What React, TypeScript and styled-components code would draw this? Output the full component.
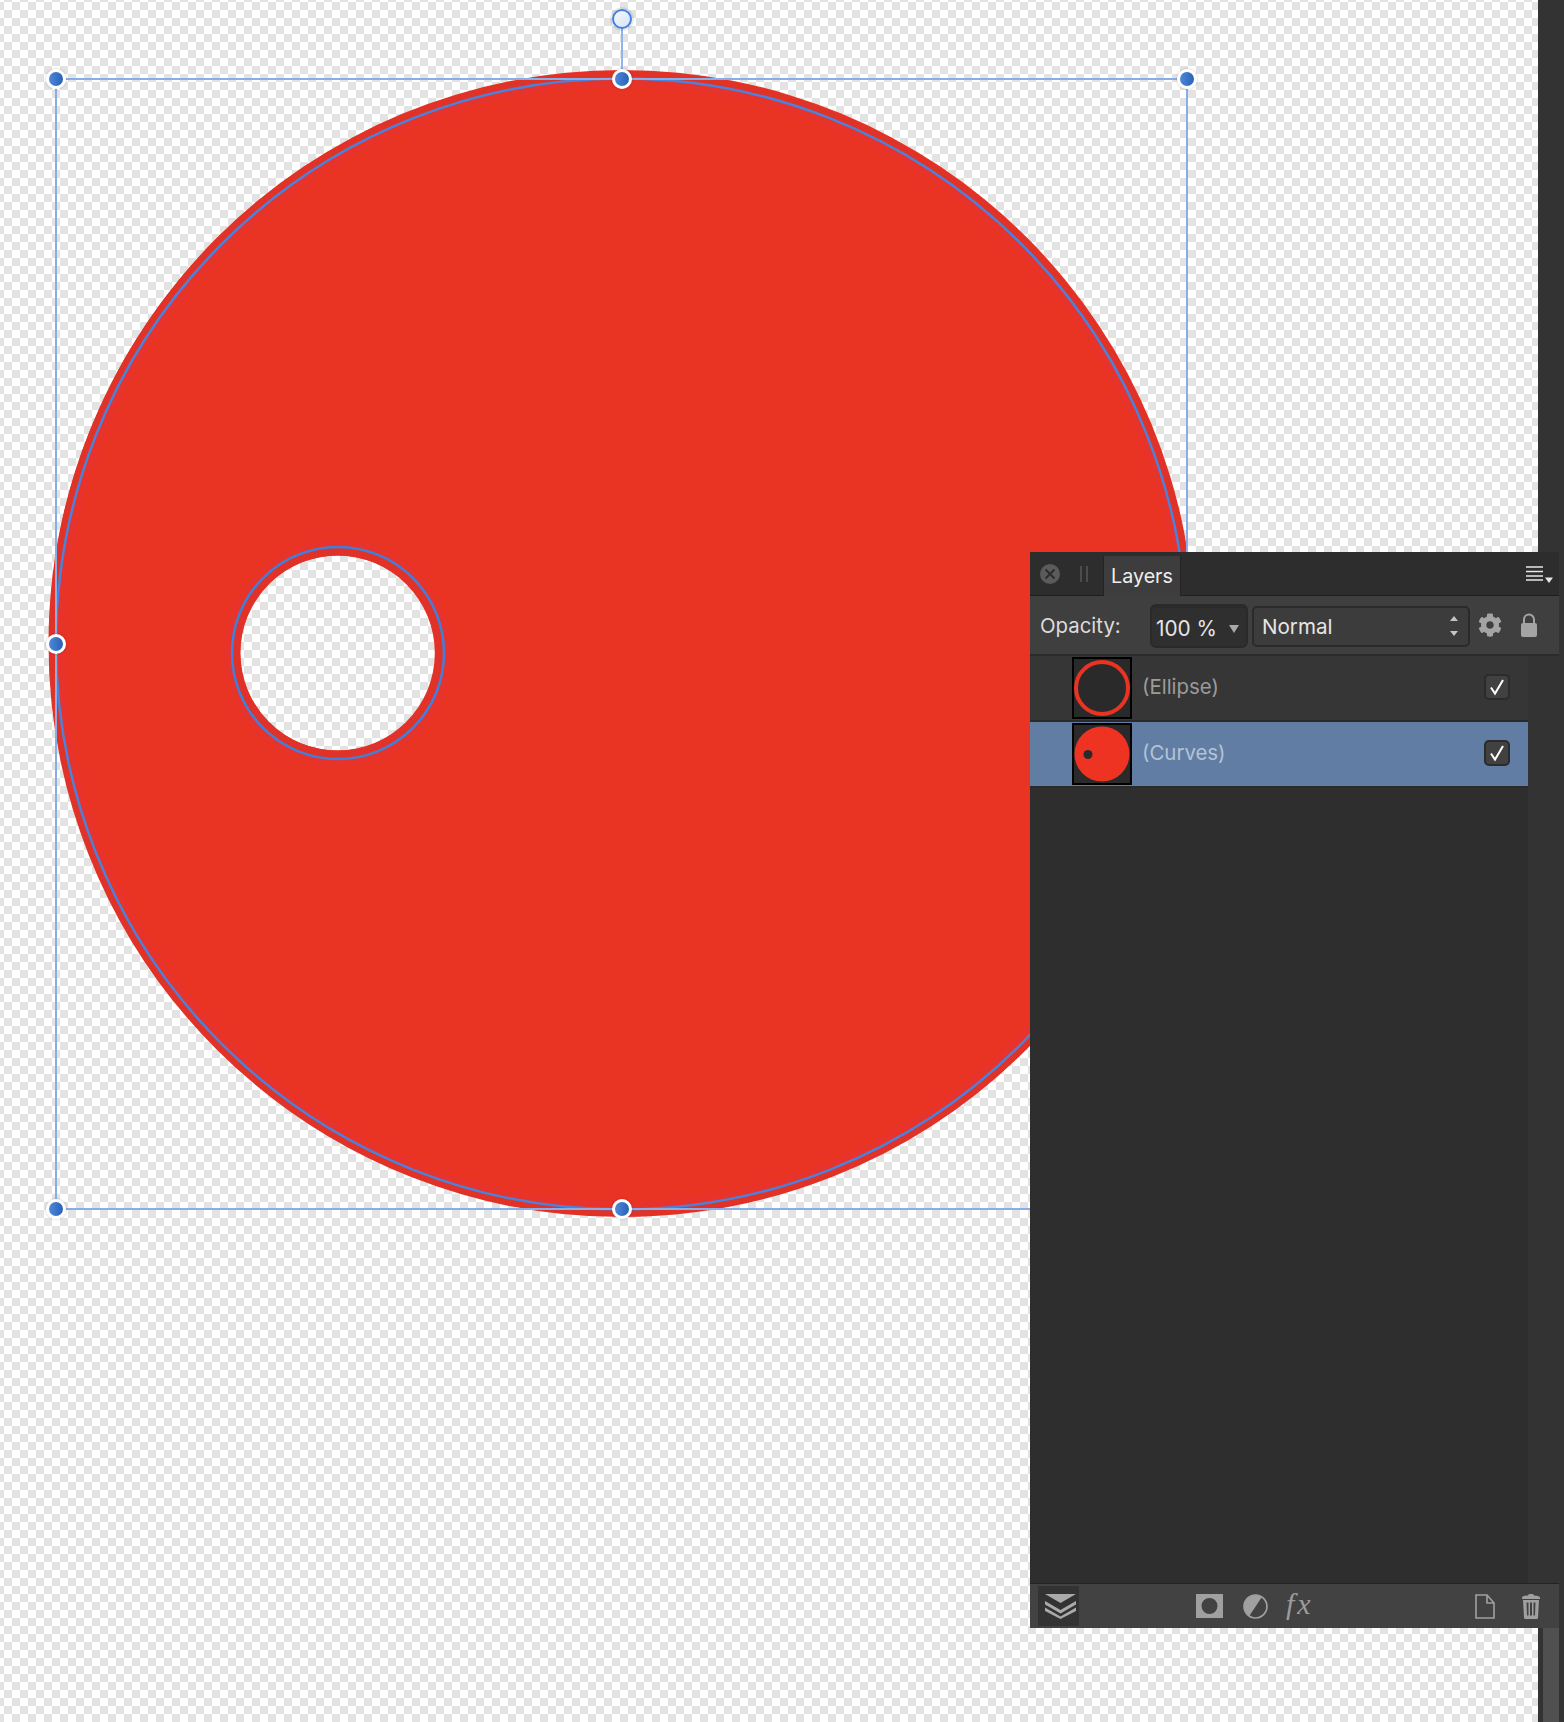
import React, { FC } from 'react';
import styled, { createGlobalStyle } from 'styled-components';
import { FaCog } from 'react-icons/fa';

const GlobalStyle = createGlobalStyle`
    html, body {
        margin: 0;
        padding: 0;
        background: #fff;
    }
    * {
        box-sizing: border-box;
    }
`;

const PANEL_FONT = `Inter, "Liberation Sans", sans-serif`;

const Page = styled.div`
    position: relative;
    display: flex;
    width: 1564px;
    height: 1722px;
    overflow: hidden;
    font-family: ${PANEL_FONT};
`;

const Canvas = styled.div`
    position: relative;
    flex: 1;
    background-color: #fff;
    background-image: conic-gradient(#e3e3e3 25%, #fff 0 50%, #e3e3e3 0 75%, #fff 0);
    background-size: 16px 16px;
    background-position: 4px 2px;
`;

const Artwork = styled.svg`
    position: absolute;
    top: 0;
    left: 0;
`;

const Handle = styled.div<{ $x: number; $y: number }>`
    position: absolute;
    left: ${(p) => p.$x - 10}px;
    top: ${(p) => p.$y - 10}px;
    width: 20px;
    height: 20px;
    border-radius: 50%;
    border: 3px solid #fff;
    background: linear-gradient(90deg, #4d88dc, #2a62b4);
    box-shadow: 0 0 3px rgba(0, 0, 0, 0.22);
`;

const RotateHandle = styled.div`
    position: absolute;
    left: 612px;
    top: 9px;
    width: 20px;
    height: 20px;
    border-radius: 50%;
    border: 2px solid #3f80e2;
    background: linear-gradient(135deg, #f6f9fe, #d6e3f8);
    box-shadow: 0 0 0 2px rgba(0, 0, 0, 0.08);
`;

const Sidebar = styled.div`
    display: flex;
    flex-direction: column;
    justify-content: flex-end;
    width: 26px;
    background: #333;
`;

const ScrollTrack = styled.div`
    width: 16px;
    height: 94px;
    margin-left: 5px;
    background: #505050;
`;

const Panel = styled.div`
    position: absolute;
    left: 1030px;
    top: 552px;
    display: flex;
    flex-direction: column;
    width: 529px;
    height: 1076px;
    background: #2e2e2e;
`;

const TabBar = styled.div`
    display: flex;
    align-items: flex-end;
    height: 44px;
    padding-left: 10px;
    background: #2d2d2d;
    border-bottom: 1px solid #1f1f1f;
`;

const CloseButton = styled.svg`
    align-self: center;
    margin-top: 1px;
`;

const Grip = styled.div`
    align-self: center;
    width: 8px;
    height: 16px;
    margin: 1px 15px 0 20px;
    border-left: 2px solid #4c4c4c;
    border-right: 2px solid #4c4c4c;
`;

const Tab = styled.div`
    display: flex;
    align-items: center;
    justify-content: center;
    width: 78px;
    height: 40px;
    margin-bottom: -1px;
    padding-bottom: 1px;
    background: #3d3d3d;
    border-left: 1px solid #232323;
    border-right: 1px solid #232323;
    color: #efefef;
    font-size: 19.7px;
`;

const PanelMenu = styled.svg`
    align-self: center;
    margin-left: auto;
    margin-right: 6px;
    margin-top: 2px;
`;

const OptionBar = styled.div`
    display: flex;
    align-items: center;
    height: 60px;
    padding-left: 10px;
    background: #3f3f3f;
    border-bottom: 2px solid #2b2b2b;
`;

const OptionLabel = styled.span`
    width: 110px;
    color: #dcdcdc;
    font-size: 20.4px;
`;

const OpacityField = styled.div`
    display: flex;
    align-items: center;
    justify-content: space-between;
    width: 98px;
    height: 44px;
    margin-top: 2px;
    padding: 3px 7px 0 4px;
    border: 2px solid #2a2a2a;
    border-top-width: 4px;
    border-radius: 6px;
    background: #2f2f2f;
    color: #e6e6e6;
    font-size: 20.8px;
`;

const BlendField = styled.div`
    display: flex;
    align-items: center;
    justify-content: space-between;
    width: 218px;
    height: 41px;
    margin-left: 4px;
    margin-top: 2px;
    padding: 0 10px 0 8px;
    border: 2px solid #2a2a2a;
    border-radius: 5px;
    background: #3c3c3c;
    color: #e6e6e6;
    font-size: 20.6px;
`;

const GearButton = styled.div`
    display: flex;
    margin-left: 8px;
    color: #a4a4a4;
`;

const LockIcon = styled.svg`
    margin-left: 19px;
`;

const ListArea = styled.div`
    display: flex;
    flex: 1;
`;

const LayerList = styled.div`
    flex: 1;
    background: #2e2e2e;
`;

const ListGutter = styled.div`
    width: 31px;
    background: #333;
`;

const LayerRow = styled.div<{ $selected?: boolean }>`
    display: flex;
    align-items: center;
    height: 66px;
    padding: 0 18px 0 42px;
    background: ${(p) => (p.$selected ? '#617da3' : '#363636')};
    border-bottom: 2px solid #2a2a2a;
`;

const Thumb = styled.svg`
    flex: none;
    border: 2px solid #000;
    background: #2a2a2a;
`;

const LayerName = styled.span<{ $selected?: boolean }>`
    flex: 1;
    margin-left: 10px;
    margin-top: -3px;
    color: ${(p) => (p.$selected ? '#b5c2d6' : '#9b9b9b')};
    font-size: 20.4px;
`;

const CheckBox = styled.div`
    display: flex;
    align-items: center;
    justify-content: center;
    width: 26px;
    height: 26px;
    margin-top: -3px;
    border: 2px solid #2b2b2b;
    border-radius: 5px;
    background: #414141;
`;

const Footer = styled.div`
    display: flex;
    align-items: center;
    height: 45px;
    padding-left: 8px;
    background: #424242;
    border-top: 1px solid #232323;
`;

const LayersButton = styled.div`
    display: flex;
    align-items: center;
    justify-content: center;
    width: 41px;
    height: 40px;
    padding-left: 3px;
    background: #333;
`;

const FooterIcon = styled.svg<{ $gap: number }>`
    flex: none;
    margin-left: ${(p) => p.$gap}px;
`;

const FxLabel = styled.span`
    flex: none;
    width: 32px;
    margin-left: 18px;
    margin-top: -4px;
    color: #9c9c9c;
    font-family: "Liberation Serif", serif;
    font-size: 30px;
    font-style: italic;
    letter-spacing: 3px;
    line-height: 1;
`;

const Selection: FC = () => (
    <Artwork width={1538} height={1722} viewBox="0 0 1538 1722">
        <path
            fillRule="evenodd"
            fill="#e93323"
            d="M49 643a573 573 0 1 0 1146 0a573 573 0 1 0 -1146 0zM240 653a97.4 97.4 0 1 1 194.8 0a97.4 97.4 0 1 1 -194.8 0z"
        />
        <circle cx="621.500" cy="644" r="569" fill="none" stroke="#e13228" strokeWidth="8" />
        <circle cx="621.500" cy="644" r="561" fill="none" stroke="#e7332a" strokeWidth="8" />
        <circle cx="338" cy="653" r="102" fill="none" stroke="#e13229" strokeWidth="9" />
        <circle cx="338" cy="653" r="110" fill="none" stroke="#e7332a" strokeWidth="8" />
        <circle cx="621.500" cy="644" r="565.500" fill="none" stroke="#4c82dc" strokeWidth="2.500" />
        <circle cx="338" cy="653" r="106" fill="none" stroke="#4080dc" strokeWidth="2.500" />
        <rect x="56" y="79" width="1131" height="1130" fill="none" stroke="#88aeea" strokeWidth="2" />
        <line x1="622" y1="28" x2="622" y2="70" stroke="#8fb4ee" strokeWidth="2" />
    </Artwork>
);

const Check: FC = () => (
    <svg width="18" height="18" viewBox="0 0 18 18">
        <path d="M3 9.500l4 6L15 2" fill="none" stroke="#fff" strokeWidth="2" />
    </svg>
);

const App: FC = () => (
    <Page>
        <GlobalStyle />
        <Canvas>
            <Selection />
            <RotateHandle />
            <Handle $x={56} $y={79} />
            <Handle $x={622} $y={79} />
            <Handle $x={1187} $y={79} />
            <Handle $x={56} $y={644} />
            <Handle $x={56} $y={1209} />
            <Handle $x={622} $y={1209} />
        </Canvas>
        <Sidebar>
            <ScrollTrack />
        </Sidebar>
        <Panel>
            <TabBar>
                <CloseButton width="20" height="20" viewBox="0 0 20 20">
                    <circle cx="10" cy="10" r="10" fill="#5b5b5b" />
                    <path d="M5.500 5.500l9 9M14.500 5.500l-9 9" stroke="#2d2d2d" strokeWidth="2" />
                </CloseButton>
                <Grip />
                <Tab>Layers</Tab>
                <PanelMenu width="27" height="18" viewBox="0 0 27 18">
                    <path d="M0 1h17M0 5.500h17M0 10h17M0 14h17" stroke="#e6e6e6" strokeWidth="1.500" />
                    <path d="M19 11.500h8l-4 5.500z" fill="#e6e6e6" />
                </PanelMenu>
            </TabBar>
            <OptionBar>
                <OptionLabel>Opacity:</OptionLabel>
                <OpacityField>
                    100 %
                    <svg width="10" height="8" viewBox="0 0 10 8">
                        <path d="M0 0h10L5 8z" fill="#a8a8a8" />
                    </svg>
                </OpacityField>
                <BlendField>
                    Normal
                    <svg width="8" height="20" viewBox="0 0 8 20">
                        <path d="M4 0l4 5H0zM4 20l4-5H0z" fill="#c4c4c4" />
                    </svg>
                </BlendField>
                <GearButton>
                    <FaCog size={24} />
                </GearButton>
                <LockIcon width="16" height="24" viewBox="0 0 16 24">
                    <path d="M3 11V6.500a5 5 0 0 1 10 0V11" fill="none" stroke="#a4a4a4" strokeWidth="2" />
                    <rect x="0" y="10" width="16" height="14" rx="2" fill="#a4a4a4" />
                </LockIcon>
            </OptionBar>
            <ListArea>
                <LayerList>
                    <LayerRow>
                        <Thumb width="60" height="62" viewBox="0 0 56 58">
                            <circle cx="28" cy="29" r="26" fill="none" stroke="#e93323" strokeWidth="4" />
                        </Thumb>
                        <LayerName>(Ellipse)</LayerName>
                        <CheckBox>
                            <Check />
                        </CheckBox>
                    </LayerRow>
                    <LayerRow $selected>
                        <Thumb width="60" height="62" viewBox="0 0 56 58">
                            <circle cx="28" cy="29" r="27.500" fill="#ee3323" />
                            <circle cx="14" cy="29.500" r="4.500" fill="#2a2a2a" />
                        </Thumb>
                        <LayerName $selected>(Curves)</LayerName>
                        <CheckBox>
                            <Check />
                        </CheckBox>
                    </LayerRow>
                </LayerList>
                <ListGutter />
            </ListArea>
            <Footer>
                <LayersButton>
                    <svg width="31" height="25" viewBox="0 0 31 25">
                        <path d="M0 0h31L15.500 9z" fill="#aaa" />
                        <path d="M0 7l15.500 9L31 7v3.500L15.500 19.500 0 10.500zM0 13.500l15.500 9 15.500-9V17L15.500 25 0 17z" fill="#aaa" />
                    </svg>
                </LayersButton>
                <FooterIcon $gap={117} width="27" height="24" viewBox="0 0 27 24">
                    <path fillRule="evenodd" d="M0 0h27v24H0zM5.500 12a8 8 0 1 0 16 0a8 8 0 1 0-16 0z" fill="#a0a0a0" />
                </FooterIcon>
                <FooterIcon $gap={20} width="25" height="25" viewBox="0 0 24 24">
                    <circle cx="12" cy="12" r="11" fill="none" stroke="#a0a0a0" strokeWidth="1.600" />
                    <path d="M12 1A11 11 0 0 0 6 21L18 3A11 11 0 0 0 12 1z" fill="#a0a0a0" />
                </FooterIcon>
                <FxLabel>fx</FxLabel>
                <FooterIcon $gap={157} width="20" height="25" viewBox="0 0 20 25">
                    <path d="M1 1h11l7 8v15H1zM12 1v8h7" fill="none" stroke="#a0a0a0" strokeWidth="1.600" />
                </FooterIcon>
                <FooterIcon $gap={27} width="18" height="26" viewBox="0 0 18 26">
                    <path d="M0 4.500C0 3 4 2.500 6 2.400 6 .5 12 .5 12 2.400 14 2.500 18 3 18 4.500V6H0z" fill="#a0a0a0" />
                    <path fillRule="evenodd" d="M1 7h16l-1 17.500q0 1.500-1.500 1.500h-11Q2 26 2 24.500zM4.500 9.500l.5 13h1.500V9.500zM8 9.500v13h2v-13zM11.500 9.500v13H13l.5-13z" fill="#a0a0a0" />
                </FooterIcon>
            </Footer>
        </Panel>
    </Page>
);

export default App;
